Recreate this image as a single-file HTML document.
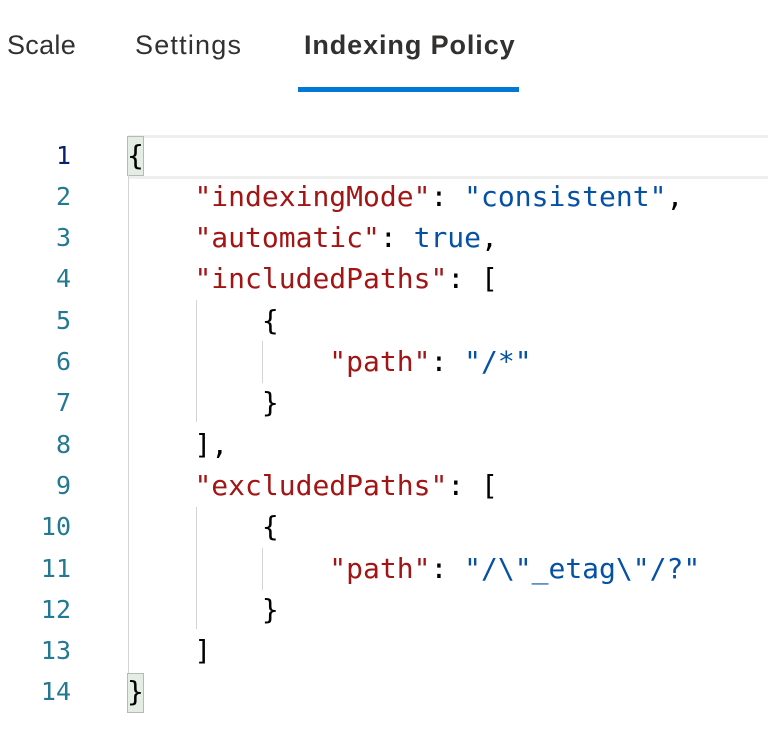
<!DOCTYPE html>
<html><head><style>
body{margin:0;width:768px;height:737px;background:#fff;position:relative;overflow:hidden;font-family:"Liberation Sans",sans-serif}
.tab{position:absolute;top:28px;font-size:27px;color:#323130;line-height:34px;white-space:nowrap}
.ul{position:absolute;left:298px;top:87px;width:221px;height:5px;background:#0078d4}
.ln{position:absolute;left:0;width:71px;text-align:right;font-family:"DejaVu Sans Mono",monospace;font-size:25px;color:#237893;height:41.3px;line-height:41.3px}
.code{position:absolute;left:127px;font-family:"DejaVu Sans Mono",monospace;font-size:28px;height:41.3px;line-height:41.3px;white-space:pre;color:#000}
.k{color:#a31515}.s{color:#0451a5}.b{color:#0451a5}
.g{position:absolute;width:1px;background:#d3d3d3}
</style></head><body>
<div class="tab" style="left:7px;letter-spacing:0.3px">Scale</div>
<div class="tab" style="left:135px;letter-spacing:1.2px">Settings</div>
<div class="tab" style="left:304px;font-weight:bold;letter-spacing:0.9px">Indexing Policy</div>
<div class="ul"></div>

<div style="position:absolute;left:128px;top:135px;width:640px;height:38px;border-top:3px solid #eeeeee;border-bottom:3px solid #eeeeee"></div>
<div style="position:absolute;left:127px;top:136px;width:15px;height:38px;background:#e3ede3;border:1px solid #b8b8b8"></div>
<div style="position:absolute;left:127px;top:673px;width:15px;height:38px;background:#e3ede3;border:1px solid #b8b8b8"></div>
<div class="g" style="left:128px;top:175px;height:498px"></div>
<div class="g" style="left:196px;top:300px;height:122px"></div>
<div class="g" style="left:196px;top:507px;height:122px"></div>
<div class="g" style="left:262px;top:341px;height:42px"></div>
<div class="g" style="left:262px;top:548px;height:42px"></div>

<div class="ln" style="top:134.5px;color:#0b216f">1</div>
<div class="ln" style="top:175.8px">2</div>
<div class="ln" style="top:217.1px">3</div>
<div class="ln" style="top:258.4px">4</div>
<div class="ln" style="top:299.7px">5</div>
<div class="ln" style="top:341px">6</div>
<div class="ln" style="top:382.3px">7</div>
<div class="ln" style="top:423.6px">8</div>
<div class="ln" style="top:464.9px">9</div>
<div class="ln" style="top:506.2px">10</div>
<div class="ln" style="top:547.5px">11</div>
<div class="ln" style="top:588.8px">12</div>
<div class="ln" style="top:630.1px">13</div>
<div class="ln" style="top:671.4px">14</div>

<div class="code" style="top:134.5px">{</div>
<div class="code" style="top:175.8px">    <span class="k">"indexingMode"</span>: <span class="s">"consistent"</span>,</div>
<div class="code" style="top:217.1px">    <span class="k">"automatic"</span>: <span class="b">true</span>,</div>
<div class="code" style="top:258.4px">    <span class="k">"includedPaths"</span>: [</div>
<div class="code" style="top:299.7px">        {</div>
<div class="code" style="top:341px">            <span class="k">"path"</span>: <span class="s">"/*"</span></div>
<div class="code" style="top:382.3px">        }</div>
<div class="code" style="top:423.6px">    ],</div>
<div class="code" style="top:464.9px">    <span class="k">"excludedPaths"</span>: [</div>
<div class="code" style="top:506.2px">        {</div>
<div class="code" style="top:547.5px">            <span class="k">"path"</span>: <span class="s">"/\"_etag\"/?"</span></div>
<div class="code" style="top:588.8px">        }</div>
<div class="code" style="top:630.1px">    ]</div>
<div class="code" style="top:671.4px">}</div>
</body></html>
